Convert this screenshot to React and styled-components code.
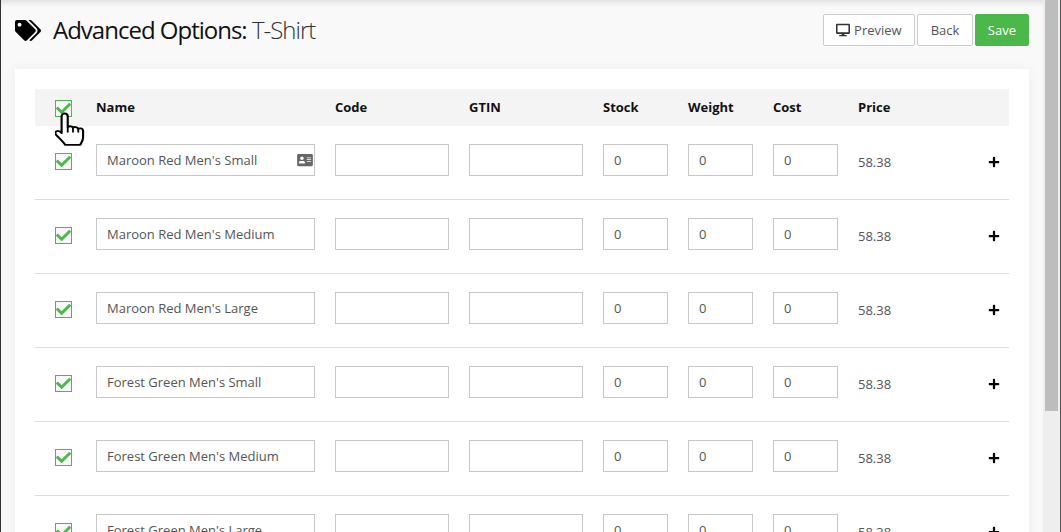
import React from 'react';
import styled, { createGlobalStyle } from 'styled-components';
import { FaTags, FaDesktop, FaCheck, FaPlus, FaAddressCard } from 'react-icons/fa';

const variants = [
  "Maroon Red Men's Small",
  "Maroon Red Men's Medium",
  "Maroon Red Men's Large",
  "Forest Green Men's Small",
  "Forest Green Men's Medium",
  "Forest Green Men's Large",
];

const columns = ['Name', 'Code', 'GTIN', 'Stock', 'Weight', 'Cost', 'Price'];

const App = () => {
  return (
    <Window>
      <GlobalStyle />
      <Page>
        <TopBar>
          <Title>
            <TagIcon />
            <TitleText>
              Advanced Options: <TitleLight>T-Shirt</TitleLight>
            </TitleText>
          </Title>
          <Actions>
            <Button>
              <FaDesktop size={14} color="#333" />
              Preview
            </Button>
            <Button>Back</Button>
            <Button $primary>Save</Button>
          </Actions>
        </TopBar>
        <Card>
          <HeadRow>
            <CheckCell>
              <CheckBox />
              <Cursor />
            </CheckCell>
            {columns.map(col => (
              <HeadCell key={col}>{col}</HeadCell>
            ))}
          </HeadRow>
          {variants.map((name, i) => (
            <Row key={name}>
              <CheckCell $row>
                <CheckBox />
              </CheckCell>
              <NameWrap>
                <Input defaultValue={name} readOnly />
                {i === 0 && <CardIcon />}
              </NameWrap>
              <Input readOnly />
              <Input readOnly />
              <Input defaultValue="0" readOnly />
              <Input defaultValue="0" readOnly />
              <Input defaultValue="0" readOnly />
              <Price>58.38</Price>
              <AddCell>
                <FaPlus size={12} color="#000" />
              </AddCell>
            </Row>
          ))}
        </Card>
      </Page>
      <ScrollTrack>
        <ScrollThumb />
      </ScrollTrack>
    </Window>
  );
};

export default App;

const CheckBox = () => (
  <Box>
    <FaCheck size={15} color="#4cb74a" />
  </Box>
);

// 커서 아이콘
const Cursor = () => (
  <CursorSvg viewBox="2 1 25 36" width="30" height="37" preserveAspectRatio="none">
    <path
      d="M10 2.5c1.6 0 2.6 1.2 2.6 2.8v10.600c.5-1.300 3.900-1.600 4.400.6.7-1.400 3.900-1.200 4.400 1 .9-1.100 3.800-.7 4 1.700v6.600c0 3-1.200 5-2.400 7.200H10.500c-1.500-3-4-5.500-7.200-9.300-1.300-1.600-1.300-3.400 0-4 1.600-.8 3.100.2 4.200 1.800V5.300C7.500 3.700 8.500 2.500 10 2.500z"
      fill="#fff"
      stroke="#000"
      strokeWidth="1.800"
      strokeLinejoin="round"
    />
    <path d="M12.600 15.900v5M17 16.500v4.500M21.400 17.500v3.500" stroke="#000" strokeWidth="1.500" fill="none" />
  </CursorSvg>
);

const GlobalStyle = createGlobalStyle`
  html, body {
    margin: 0;
    padding: 0;
    overflow: hidden;
  }
  body {
    font-family: "Open Sans", "Liberation Sans", sans-serif;
  }
`;

const Window = styled.div`
  display: flex;
  width: 1061px;
  height: 532px;
  overflow: hidden;
  background: #f9f9f9;
  border-left: 1px solid #333;
  border-right: 1px solid #555;
  box-sizing: border-box;
`;

const Page = styled.main`
  flex: 1;
  min-width: 0;
  padding: 0 14px;
  box-shadow: inset 0 6px 6px -4px rgba(0, 0, 0, 0.12);
`;

const TopBar = styled.header`
  display: flex;
  justify-content: space-between;
  align-items: center;
  height: 69px;
  padding-bottom: 9px;
  box-sizing: border-box;
`;

const Title = styled.div`
  display: flex;
  align-items: center;
  gap: 12px;
`;

const TagIcon = styled(FaTags)`
  width: 26px;
  height: 21px;
  color: #000;
`;

const TitleText = styled.h1`
  margin: 0 0 1px;
  font-size: 24px;
  font-weight: 400;
  letter-spacing: -1px;
  color: #111;
`;

const TitleLight = styled.span`
  font-weight: 300;
  color: #333;
`;

const Actions = styled.div`
  display: flex;
  gap: 2px;
`;

const Button = styled.button`
  display: flex;
  align-items: center;
  gap: 4px;
  height: 32px;
  padding: 0 ${props => (props.$primary ? '12px' : '12.5px')};
  border: 1px solid ${props => (props.$primary ? '#4cb74a' : '#ccc')};
  border-radius: 2px;
  background: ${props => (props.$primary ? '#4cb74a' : '#fff')};
  color: ${props => (props.$primary ? '#fff' : '#555')};
  font-family: inherit;
  font-size: 13px;
`;

const Card = styled.section`
  padding: 20px;
  background: #fff;
  box-shadow: 0 0 12px rgba(0, 0, 0, 0.05);
`;

const gridColumns = '41px 219px 114px 114px 65px 65px 65px 1fr 30px';

const HeadRow = styled.div`
  display: grid;
  grid-template-columns: ${gridColumns};
  column-gap: 20px;
  align-items: center;
  height: 37px;
  padding-bottom: 1px;
  box-sizing: border-box;
  background: #f4f4f4;
`;

const HeadCell = styled.div`
  font-size: 13px;
  font-weight: 700;
  color: #111;
`;

const Row = styled.div`
  display: grid;
  grid-template-columns: ${gridColumns};
  column-gap: 20px;
  align-items: center;
  height: 74px;
  padding: 18px 0 23px;
  border-bottom: 1px solid #ddd;
  box-sizing: border-box;
`;

const CheckCell = styled.div`
  position: relative;
  display: flex;
  padding: ${props => (props.$row ? '3px' : '2px')} 0 0 20px;
`;

const Box = styled.span`
  display: flex;
  align-items: flex-end;
  justify-content: center;
  width: 17px;
  height: 17px;
  border: 1px solid #4cb74a;
  box-sizing: border-box;
  background: #f8f8f8;
`;

const CursorSvg = styled.svg`
  position: absolute;
  left: 20px;
  top: 14px;
`;

const NameWrap = styled.div`
  position: relative;
`;

const CardIcon = styled(FaAddressCard)`
  position: absolute;
  right: 2px;
  top: 9px;
  width: 16px;
  height: 14px;
  color: #666;
`;

const Input = styled.input`
  display: block;
  width: 100%;
  height: 32px;
  padding: 0 10px;
  border: 1px solid #c8c8c8;
  background: #fff;
  box-sizing: border-box;
  font-family: inherit;
  font-size: 13px;
  color: #555;
  outline: none;
`;

const Price = styled.div`
  font-size: 13px;
  color: #555;
  padding-top: 4px;
`;

const AddCell = styled.div`
  display: flex;
  justify-content: flex-end;
  padding: 4px 9px 0 0;
`;

const ScrollTrack = styled.div`
  flex: 0 0 17px;
  padding-left: 2px;
  box-sizing: border-box;
  background: #eee;
`;

const ScrollThumb = styled.div`
  width: 13px;
  height: 411px;
  background: #bdbdbd;
`;
